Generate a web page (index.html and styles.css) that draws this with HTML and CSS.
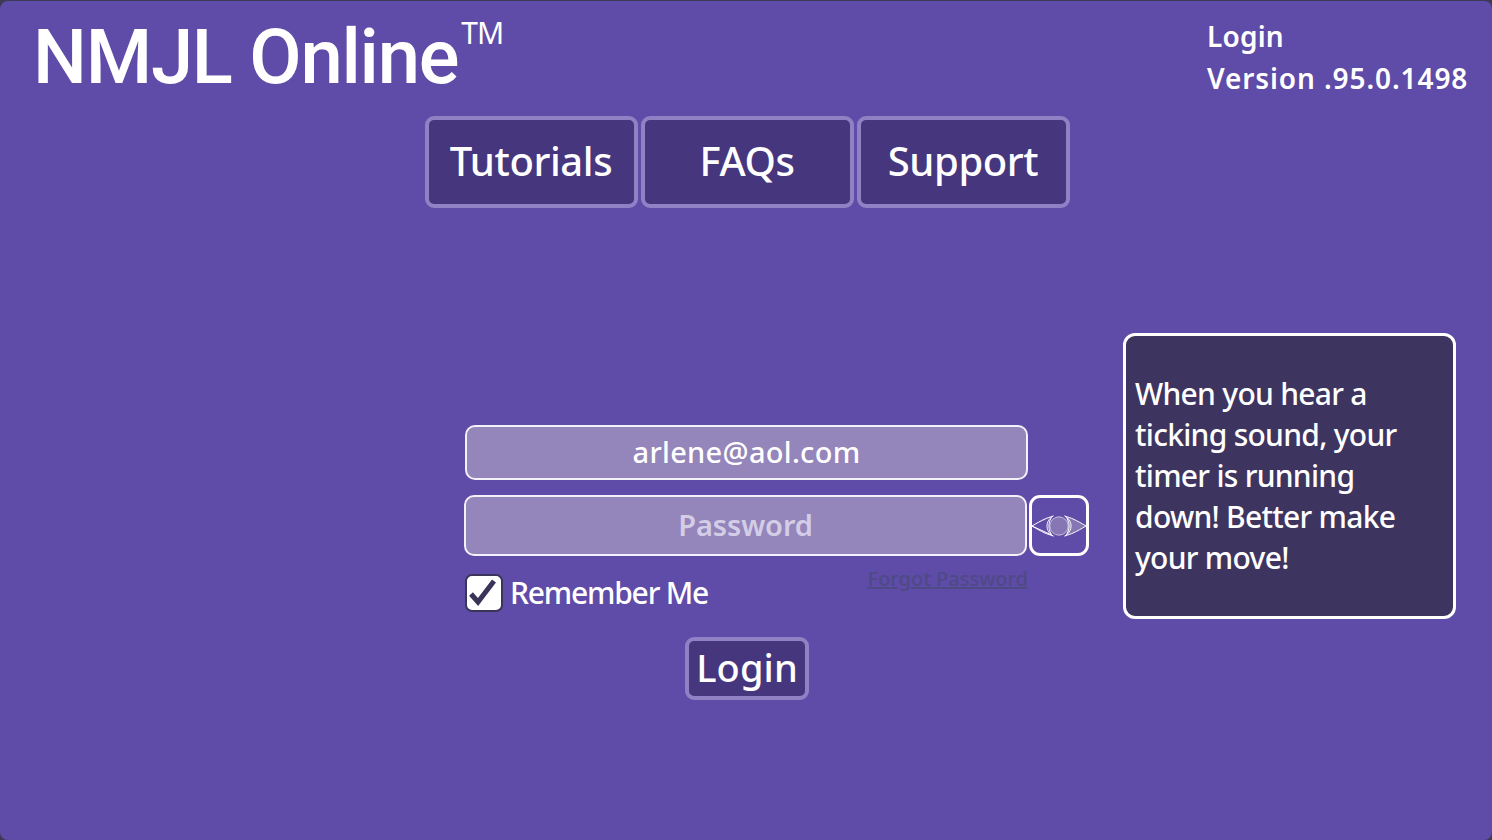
FILE: index.html
```html
<!DOCTYPE html>
<html lang="en">
<head>
<meta charset="utf-8">
<title>NMJL Online</title>
<link rel="stylesheet" href="styles.css">
</head>
<body>
<div class="app">
  <header class="top">
    <h1 class="brand">NMJL Online<sup class="tm">TM</sup></h1>
    <div class="meta">
      <div>Login</div>
      <div class="version">Version .95.0.1498</div>
    </div>
  </header>
  <nav class="nav">
    <a class="nav-btn">Tutorials</a>
    <a class="nav-btn">FAQs</a>
    <a class="nav-btn">Support</a>
  </nav>
  <main class="stage">
    <form class="form">
      <input class="field field-email" type="text" value="arlene@aol.com">
      <div class="pw-row">
        <input class="field field-pw" type="password" placeholder="Password">
        <button class="eye" type="button" aria-label="Show password">
          <svg width="56" height="24" viewBox="0 0 56 24" fill="none">
            <path d="M0 12 C10 6 16 3 22 2 M34 2 C40 3 46 6 56 12 C46 18 40 21 34 22 M22 22 C16 21 10 18 0 12Z" fill="#8677b4" stroke="#fff" stroke-width="1"/>
            <path d="M20 3 H36 V21 H20Z" fill="#5f4ba8"/>
            <circle cx="28" cy="12" r="9.5" fill="#8677b4" stroke="#c9c1e3" stroke-width="1"/>
            <path d="M22 1 C16 7 16 17 22 23 M34 1 C40 7 40 17 34 23 M20 3 C14 8 14 16 20 21 M36 3 C42 8 42 16 36 21" stroke="#fff" stroke-width="1"/>
          </svg>
        </button>
      </div>
      <div class="options">
        <label class="remember">
          <span class="check">
            <svg width="32" height="32" viewBox="0 0 32 32" fill="none"><path d="M3 17 L10 25 L26 4" stroke="#3a3558" stroke-width="5"/></svg>
          </span>
          <span>Remember Me</span>
        </label>
        <a class="forgot">Forgot Password</a>
      </div>
      <button class="login" type="button">Login</button>
    </form>
    <aside class="tip">
      <p>When you hear a ticking sound, your timer is running down! Better make your move!</p>
    </aside>
  </main>
</div>
</body>
</html>
```

FILE: styles.css
```css
* { box-sizing: border-box; }
html, body { margin: 0; height: 100%; }
body { background: #3d3a55; font-family: "Noto Sans", sans-serif; font-weight: 500; color: #fff; overflow: hidden; }
.app { height: 839px; margin-top: 1px; background: #5f4ba8; border-radius: 8px; display: flex; flex-direction: column; }
.top { display: flex; justify-content: space-between; height: 115px; padding: 0 23px 0 33px; }
.brand { margin: 13px 0 0; font-family: Roboto, sans-serif; font-size: 76px; font-weight: 500; line-height: 86px; height: 86px; letter-spacing: -1.25px; white-space: nowrap; }
.tm { font-family: "Noto Sans", sans-serif; font-size: 30px; font-weight: 400; line-height: 0; vertical-align: 39px; letter-spacing: -1px; margin-left: 3px; }
.meta { margin-top: 14px; font-size: 28px; font-weight: 600; line-height: 42px; letter-spacing: .2px; width: 262px; white-space: nowrap; }
.version { letter-spacing: .9px; }
.nav { display: flex; justify-content: center; gap: 3px; padding-left: 2px; }
.nav-btn { width: 213px; height: 92px; display: flex; align-items: center; justify-content: center; padding-bottom: 4px; background: #46367e; border: 4px solid #9080c4; border-radius: 9px; font-size: 40px; letter-spacing: -.4px; }
.stage { display: flex; align-items: flex-start; padding-left: 464px; }
.form { width: 625px; margin-top: 217px; display: flex; flex-direction: column; }
.field { display: block; background: #9485bb; border: 2px solid #f2f0f8; border-radius: 10px; color: #fff; font: inherit; text-align: center; outline: none; padding: 0 0 2px; }
.field-email { width: 563px; height: 55px; margin-left: 1px; font-size: 29px; letter-spacing: .3px; }
.pw-row { display: flex; gap: 2px; margin-top: 15px; }
.field-pw { width: 563px; height: 61px; font-size: 29px; font-weight: 600; letter-spacing: -.1px; }
.field-pw::placeholder { color: #d3cde6; opacity: 1; }
.eye { width: 60px; height: 61px; padding: 0; background: transparent; border: 3px solid #fff; border-radius: 11px; display: flex; align-items: center; justify-content: center; }
.options { width: 563px; margin-left: 1px; display: flex; justify-content: space-between; align-items: flex-start; }
.remember { margin-top: 18px; display: flex; align-items: center; gap: 7px; font-size: 30px; line-height: 36px; letter-spacing: -1.2px; }
.check { width: 38px; height: 38px; background: #fff; border: 2px solid #3a3558; border-radius: 7px; display: flex; align-items: center; justify-content: center; }
.forgot { margin-top: 11px; font-size: 20px; line-height: 24px; color: #4d4a86; text-decoration: underline; }
.login { align-self: flex-start; margin: 25px 0 0 221px; width: 124px; height: 63px; padding: 0 0 4px; background: #46367e; border: 4px solid #9080c4; border-radius: 9px; color: #fff; font: inherit; font-size: 38px; letter-spacing: .1px; }
.tip { width: 333px; height: 286px; margin: 125px 0 0 34px; display: flex; align-items: center; padding: 0 9px 2px; background: #3e3460; border: 3px solid #fff; border-radius: 12px; }
.tip p { margin: 0; font-size: 30px; line-height: 41px; letter-spacing: -.72px; }
```
